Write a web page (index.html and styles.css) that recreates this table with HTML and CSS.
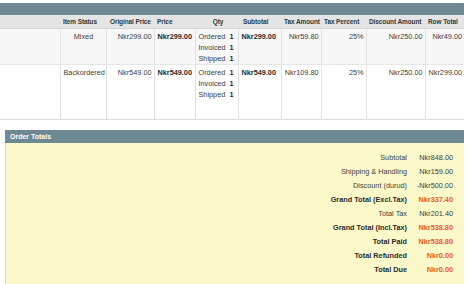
FILE: index.html
```html
<!DOCTYPE html>
<html lang="en">
<head>
  <meta charset="UTF-8" />
  <title>Order View</title>
  <link rel="stylesheet" href="styles.css">
</head>
<body>
  <div class="items">
    <div class="box-head"></div>
    <table class="grid">
      <colgroup>
        <col class="c-product">
        <col class="c-status">
        <col class="c-orig">
        <col class="c-price">
        <col class="c-qty">
        <col class="c-sub">
        <col class="c-tax">
        <col class="c-pct">
        <col class="c-disc">
        <col class="c-total">
      </colgroup>
      <thead>
        <tr>
          <th></th>
          <th>Item Status</th>
          <th class="pl-4">Original Price</th>
          <th>Price</th>
          <th class="center">Qty</th>
          <th class="pl-5">Subtotal</th>
          <th>Tax Amount</th>
          <th>Tax Percent</th>
          <th>Discount Amount</th>
          <th>Row Total</th>
        </tr>
      </thead>
      <tbody>
        <tr class="row-odd">
          <td></td>
          <td class="center">Mixed</td>
          <td class="right">Nkr299.00</td>
          <td><strong>Nkr299.00</strong></td>
          <td>
            <div class="qty">
              <span>Ordered</span><strong>1</strong>
              <span>Invoiced</span><strong>1</strong>
              <span>Shipped</span><strong>1</strong>
            </div>
          </td>
          <td><strong>Nkr299.00</strong></td>
          <td class="right">Nkr59.80</td>
          <td class="right">25%</td>
          <td class="right">Nkr250.00</td>
          <td class="right">Nkr49.00</td>
        </tr>
        <tr class="row-even">
          <td></td>
          <td class="center">Backordered</td>
          <td class="right">Nkr549.00</td>
          <td><strong>Nkr549.00</strong></td>
          <td>
            <div class="qty">
              <span>Ordered</span><strong>1</strong>
              <span>Invoiced</span><strong>1</strong>
              <span>Shipped</span><strong>1</strong>
            </div>
          </td>
          <td><strong>Nkr549.00</strong></td>
          <td class="right">Nkr109.80</td>
          <td class="right">25%</td>
          <td class="right">Nkr250.00</td>
          <td class="right">Nkr299.00</td>
        </tr>
      </tbody>
    </table>
  </div>

  <div class="totals">
    <div class="totals-head">Order Totals</div>
    <div class="totals-body">
      <div class="totals-grid">
        <span>Subtotal</span><span>Nkr848.00</span>
        <span>Shipping &amp; Handling</span><span>Nkr159.00</span>
        <span>Discount (durud)</span><span>-Nkr500.00</span>
        <strong>Grand Total (Excl.Tax)</strong><strong class="price">Nkr337.40</strong>
        <span>Total Tax</span><span>Nkr201.40</span>
        <strong>Grand Total (Incl.Tax)</strong><strong class="price">Nkr538.80</strong>
        <strong>Total Paid</strong><strong class="price">Nkr538.80</strong>
        <strong>Total Refunded</strong><strong class="price">Nkr0.00</strong>
        <strong>Total Due</strong><strong class="price">Nkr0.00</strong>
      </div>
    </div>
  </div>
</body>
</html>
```

FILE: styles.css
```css
body {
  font-family: "Liberation Sans", Arial, sans-serif;
  font-size: 7.3px;
  color: #404040;
  margin: 0;
  background: #fff;
  width: 474px;
}

.items {
  width: 464px;
  padding-top: 3px;
}

.box-head {
  height: 12px;
  background: #6f8992;
}

.grid {
  border-collapse: collapse;
  table-layout: fixed;
  width: 464px;
}

.c-product { width: 60px; }
.c-status { width: 46px; }
.c-orig { width: 48px; }
.c-price { width: 41px; }
.c-qty { width: 43px; }
.c-sub { width: 43px; }
.c-tax { width: 40px; }
.c-pct { width: 45px; }
.c-disc { width: 59px; }
.c-total { width: 39px; }

.grid th {
  height: 13px;
  padding: 0 0 0 3px;
  background: #e4e4e4;
  border-bottom: 1px solid #d2d6d8;
  color: #2d3b42;
  font-size: 6.5px;
  letter-spacing: -0.1px;
  font-weight: bold;
  text-align: left;
  white-space: nowrap;
  overflow: hidden;
  line-height: 12px;
}

.grid th.pl-4 { padding-left: 4px; }
.grid th.pl-5 { padding-left: 5px; }

.grid td {
  padding: 2px 2px 0 3px;
  vertical-align: top;
  line-height: 11px;
  border-left: 1px solid #e2e2e2;
  white-space: nowrap;
}

.grid td:first-child {
  border-left: none;
}

.grid .row-odd {
  height: 35px;
  background: #f7f7f7;
}

.grid .row-even {
  height: 55px;
  background: #fff;
  border-top: 1px solid #e6e6e6;
  border-bottom: 1px solid #dcdcdc;
}

.grid th.center,
.grid td.center {
  text-align: center;
}

.grid td.right {
  text-align: right;
}

.grid strong {
  color: #2a2a2a;
}

.qty {
  display: grid;
  grid-template-columns: 1fr auto;
  padding-right: 2px;
  color: #404040;
}

.totals {
  margin: 10px 0 0 5px;
  width: 459px;
}

.totals-head {
  height: 13px;
  line-height: 13px;
  padding-left: 5px;
  background: #6f8992;
  color: #fff;
  font-size: 7px;
  font-weight: bold;
}

.totals-body {
  background: #fbf9c9;
  border-left: 1px solid #dcdcc0;
  padding: 8px 11px 10px 0;
}

.totals-grid {
  display: grid;
  grid-template-columns: 1fr 46px;
  line-height: 14px;
  text-align: right;
}

.totals-grid strong {
  color: #2a2a2a;
}

.totals-grid .price {
  color: #ef5a24;
}
```
